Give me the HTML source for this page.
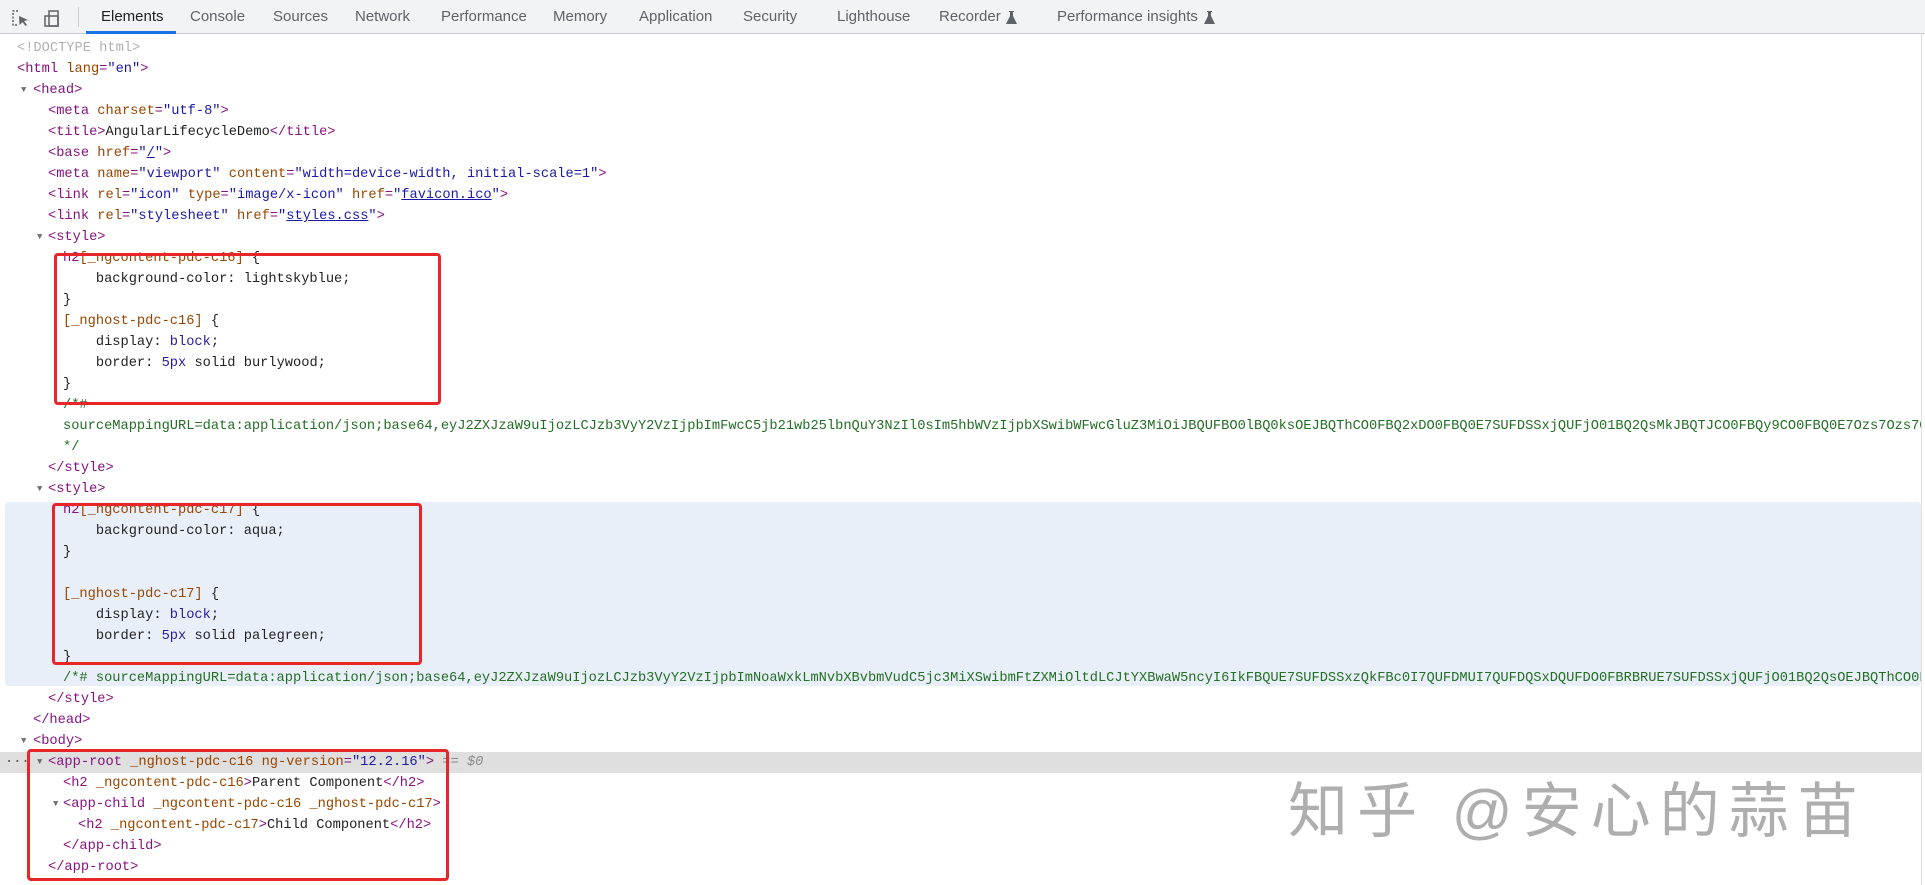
<!DOCTYPE html>
<html><head><meta charset="utf-8">
<style>
html,body{margin:0;padding:0;}
body{width:1925px;height:885px;overflow:hidden;background:#fff;position:relative;font-family:"Liberation Mono",monospace;font-size:13.7px;color:#222;}
.bar{position:absolute;left:0;top:0;width:1925px;height:34px;background:#f1f3f4;border-bottom:1px solid #cbcdd1;box-sizing:border-box;font-family:"Liberation Sans",sans-serif;font-size:15px;color:#5f6368;}
.tab{position:absolute;top:8px;white-space:nowrap;}
.l{position:absolute;height:21px;line-height:21px;white-space:pre;}
.t{color:#881280}.a{color:#994500}.v{color:#1a1aa6}.c{color:#236e25}.g{color:#b0b0b0}.k{color:#222}.n{color:#2a1aa0}
.tri{position:absolute;font-size:9px;color:#6e6e6e;line-height:21px;height:21px;}
.box{position:absolute;border:3px solid #e8262a;border-radius:4px;box-sizing:border-box;}
u{text-decoration:underline}
</style></head><body>
<div class="bar">
<svg style="position:absolute;left:12px;top:10px" width="18" height="17" viewBox="0 0 18 17"><path d="M6 1H1v14h4" fill="none" stroke="#5f6368" stroke-width="1.5" stroke-dasharray="2 1.5"/><path d="M7 6l9 4-4 1 3 4-1.5 1-3-4-3 3z" fill="#5f6368"/></svg>
<svg style="position:absolute;left:44px;top:10px" width="20" height="17" viewBox="0 0 20 17"><rect x="5" y="1" width="9" height="15" fill="none" stroke="#5f6368" stroke-width="1.5"/><rect x="1" y="6" width="13" height="10" fill="none" stroke="#5f6368" stroke-width="1.5"/></svg>
<div style="position:absolute;left:78px;top:7px;width:1px;height:20px;background:#cbcdd1"></div>
<div class="tab" style="left:101px;color:#202124">Elements</div>
<div style="position:absolute;left:86px;top:31px;width:90px;height:3px;background:#1a73e8"></div>
<div class="tab" style="left:190px">Console</div>
<div class="tab" style="left:273px">Sources</div>
<div class="tab" style="left:355px">Network</div>
<div class="tab" style="left:441px">Performance</div>
<div class="tab" style="left:553px">Memory</div>
<div class="tab" style="left:639px">Application</div>
<div class="tab" style="left:743px">Security</div>
<div class="tab" style="left:837px">Lighthouse</div>
<div class="tab" style="left:939px">Recorder</div>
<svg style="position:absolute;left:1006px;top:11px" width="11" height="13" viewBox="0 0 11 13"><path d="M3 0h5v1H7v4l4 8H0l4-8V1H3z" fill="#5f6368"/></svg>
<div class="tab" style="left:1057px">Performance insights</div>
<svg style="position:absolute;left:1204px;top:11px" width="11" height="13" viewBox="0 0 11 13"><path d="M3 0h5v1H7v4l4 8H0l4-8V1H3z" fill="#5f6368"/></svg>
</div>

<div style="position:absolute;left:5px;top:502px;width:1916px;height:184px;background:#e9eff9;border-radius:4px"></div>
<div style="position:absolute;left:0;top:752px;width:1921px;height:21px;background:#dfdfdf"></div>
<div style="position:absolute;left:1921px;top:34px;width:1px;height:851px;background:#ddd"></div>

<div class="l g" style="left:17px;top:38px">&lt;!DOCTYPE html&gt;</div>
<div class="l t" style="left:17px;top:59px">&lt;html <span class="a">lang</span>=<span class="v">"en"</span>&gt;</div>
<div class="tri" style="left:21px;top:80px">▼</div>
<div class="l t" style="left:33px;top:80px">&lt;head&gt;</div>
<div class="l t" style="left:48px;top:101px">&lt;meta <span class="a">charset</span>=<span class="v">"utf-8"</span>&gt;</div>
<div class="l t" style="left:48px;top:122px">&lt;title&gt;<span class="k">AngularLifecycleDemo</span>&lt;/title&gt;</div>
<div class="l t" style="left:48px;top:143px">&lt;base <span class="a">href</span>=<span class="v">"<u>/</u>"</span>&gt;</div>
<div class="l t" style="left:48px;top:164px">&lt;meta <span class="a">name</span>=<span class="v">"viewport"</span> <span class="a">content</span>=<span class="v">"width=device-width, initial-scale=1"</span>&gt;</div>
<div class="l t" style="left:48px;top:185px">&lt;link <span class="a">rel</span>=<span class="v">"icon"</span> <span class="a">type</span>=<span class="v">"image/x-icon"</span> <span class="a">href</span>=<span class="v">"<u>favicon.ico</u>"</span>&gt;</div>
<div class="l t" style="left:48px;top:206px">&lt;link <span class="a">rel</span>=<span class="v">"stylesheet"</span> <span class="a">href</span>=<span class="v">"<u>styles.css</u>"</span>&gt;</div>
<div class="tri" style="left:37px;top:227px">▼</div>
<div class="l t" style="left:48px;top:227px">&lt;style&gt;</div>
<div class="l" style="left:63px;top:248px"><span class="t">h2</span><span class="a">[_ngcontent-pdc-c16]</span> {</div>
<div class="l" style="left:63px;top:269px">    background-color: lightskyblue;</div>
<div class="l" style="left:63px;top:290px">}</div>
<div class="l" style="left:63px;top:311px"><span class="a">[_nghost-pdc-c16]</span> {</div>
<div class="l" style="left:63px;top:332px">    display: <span class="n">block</span>;</div>
<div class="l" style="left:63px;top:353px">    border: <span class="n">5px</span> solid burlywood;</div>
<div class="l" style="left:63px;top:374px">}</div>
<div class="l c" style="left:63px;top:395px">/*#</div>
<div class="l c" style="left:63px;top:416px;width:1858px;overflow:hidden">sourceMappingURL=data:application/json;base64,eyJ2ZXJzaW9uIjozLCJzb3VyY2VzIjpbImFwcC5jb21wb25lbnQuY3NzIl0sIm5hbWVzIjpbXSwibWFwcGluZ3MiOiJBQUFBO0lBQ0ksOEJBQThCO0FBQ2xDO0FBQ0E7SUFDSSxjQUFjO01BQ2QsMkJBQTJCO0FBQy9CO0FBQ0E7Ozs7Ozs7Ozs7Ozs</div>
<div class="l c" style="left:63px;top:437px">*/</div>
<div class="l t" style="left:48px;top:458px">&lt;/style&gt;</div>
<div class="tri" style="left:37px;top:479px">▼</div>
<div class="l t" style="left:48px;top:479px">&lt;style&gt;</div>
<div class="l" style="left:63px;top:500px"><span class="t">h2</span><span class="a">[_ngcontent-pdc-c17]</span> {</div>
<div class="l" style="left:63px;top:521px">    background-color: aqua;</div>
<div class="l" style="left:63px;top:542px">}</div>
<div class="l" style="left:63px;top:584px"><span class="a">[_nghost-pdc-c17]</span> {</div>
<div class="l" style="left:63px;top:605px">    display: <span class="n">block</span>;</div>
<div class="l" style="left:63px;top:626px">    border: <span class="n">5px</span> solid palegreen;</div>
<div class="l" style="left:63px;top:647px">}</div>
<div class="l c" style="left:63px;top:668px;width:1858px;overflow:hidden">/*# sourceMappingURL=data:application/json;base64,eyJ2ZXJzaW9uIjozLCJzb3VyY2VzIjpbImNoaWxkLmNvbXBvbmVudC5jc3MiXSwibmFtZXMiOltdLCJtYXBwaW5ncyI6IkFBQUE7SUFDSSxzQkFBc0I7QUFDMUI7QUFDQSxDQUFDO0FBRBRUE7SUFDSSxjQUFjO01BQ2QsOEJBQThCO0FBQ2xDO0FBQ0E</div>
<div class="l t" style="left:48px;top:689px">&lt;/style&gt;</div>
<div class="l t" style="left:33px;top:710px">&lt;/head&gt;</div>
<div class="tri" style="left:21px;top:731px">▼</div>
<div class="l t" style="left:33px;top:731px">&lt;body&gt;</div>
<div class="l" style="left:5px;top:752px;color:#555">···</div>
<div class="tri" style="left:37px;top:752px">▼</div>
<div class="l t" style="left:48px;top:752px">&lt;app-root <span class="a">_nghost-pdc-c16</span> <span class="a">ng-version</span>=<span class="v">"12.2.16"</span>&gt; <span style="color:#8a8a8a;font-style:italic">== $0</span></div>
<div class="l t" style="left:63px;top:773px">&lt;h2 <span class="a">_ngcontent-pdc-c16</span>&gt;<span class="k">Parent Component</span>&lt;/h2&gt;</div>
<div class="tri" style="left:53px;top:794px">▼</div>
<div class="l t" style="left:63px;top:794px">&lt;app-child <span class="a">_ngcontent-pdc-c16</span> <span class="a">_nghost-pdc-c17</span>&gt;</div>
<div class="l t" style="left:78px;top:815px">&lt;h2 <span class="a">_ngcontent-pdc-c17</span>&gt;<span class="k">Child Component</span>&lt;/h2&gt;</div>
<div class="l t" style="left:63px;top:836px">&lt;/app-child&gt;</div>
<div class="l t" style="left:48px;top:857px">&lt;/app-root&gt;</div>

<div class="box" style="left:54px;top:253px;width:387px;height:152px"></div>
<div class="box" style="left:52px;top:503px;width:370px;height:162px"></div>
<div class="box" style="left:27px;top:749px;width:422px;height:132px"></div>

<div style="position:absolute;left:1288px;top:772px;line-height:80px;font-family:'Liberation Sans','Noto Sans CJK SC',sans-serif;font-size:60px;color:rgba(130,130,130,0.65);white-space:nowrap;letter-spacing:9px">知乎 @安心的蒜苗</div>
</body></html>
